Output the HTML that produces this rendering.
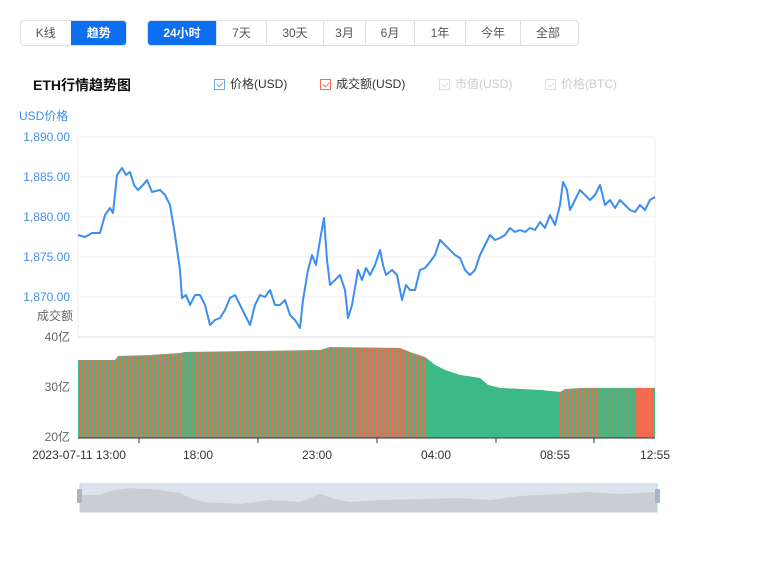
<!DOCTYPE html>
<html><head><meta charset="utf-8"><style>
body{margin:0;background:#fff;width:780px;height:563px;overflow:hidden;font-family:"Liberation Sans","Noto Sans CJK SC",sans-serif;position:relative}
.grp{position:absolute;top:20px;height:26px;display:flex;border:1px solid #dcdfe6;border-radius:4px;overflow:hidden;box-sizing:border-box}
.grp div{font-size:12px;color:#555;line-height:24px;text-align:center;border-left:1px solid #dcdfe6}
.grp div:first-child{border-left:none}
.grp .on{background:#0d6ff0;color:#fff;font-weight:bold;border-color:#0d6ff0}
.t{position:absolute;white-space:nowrap}
.cb{display:inline-block;width:11px;height:11px;border:1px solid;vertical-align:-2px;margin-right:5px;box-sizing:border-box;position:relative}
.cb:after{content:"";position:absolute;left:3px;top:1px;width:3px;height:5px;border:solid;border-width:0 1px 1px 0;border-color:inherit;transform:rotate(45deg)}
</style></head><body>
<div class="grp" style="left:20px;width:107px"><div style="width:51px">K线</div><div class="on" style="width:56px">趋势</div></div>
<div class="grp" style="left:147px;width:432px"><div class="on" style="width:68px">24小时</div><div style="width:49px">7天</div><div style="width:56px">30天</div><div style="width:41px">3月</div><div style="width:48px">6月</div><div style="width:50px">1年</div><div style="width:54px">今年</div><div style="width:54px">全部</div></div>
<div class="t" style="left:33px;top:75px;font-size:14px;font-weight:bold;color:#111">ETH行情趋势图</div>
<div class="t" style="left:214px;top:75px;font-size:12px;color:#333"><span class="cb" style="border-color:#6ca6f0"></span>价格(USD)</div>
<div class="t" style="left:320px;top:75px;font-size:12px;color:#333"><span class="cb" style="border-color:#f07050"></span>成交额(USD)</div>
<div class="t" style="left:439px;top:75px;font-size:12px;color:#ccc"><span class="cb" style="border-color:#ddd"></span>市值(USD)</div>
<div class="t" style="left:545px;top:75px;font-size:12px;color:#ccc"><span class="cb" style="border-color:#ddd"></span>价格(BTC)</div>
<div class="t" style="left:19px;top:107px;font-size:12px;color:#3d8ef0">USD价格</div>
<svg width="780" height="563" style="position:absolute;left:0;top:0" font-family="Liberation Sans,Noto Sans CJK SC,sans-serif">
<defs>
<pattern id="st" width="4" height="10" patternUnits="userSpaceOnUse"><rect width="2" height="10" fill="#f26b4f"/><rect x="2" width="2" height="10" fill="#3cba85"/></pattern>
<clipPath id="vc"><polygon points="78,360 115,360 118,356 150,355 180,353 185,352 250,351 320,350 330,347 400,348 410,352 425,357 435,365 445,370 460,375 480,378 488,385 500,388 540,390 560,392 565,389 580,388 655,388 655,438 78,438"/></clipPath>
</defs>
<g stroke="#eee" fill="none"><line x1="78" y1="137" x2="655" y2="137"/><line x1="78" y1="177" x2="655" y2="177"/><line x1="78" y1="217" x2="655" y2="217"/><line x1="78" y1="257" x2="655" y2="257"/><line x1="78" y1="297" x2="655" y2="297"/><line x1="78" y1="337" x2="655" y2="337" stroke="#ddd"/><line x1="78" y1="137" x2="78" y2="337"/><line x1="655" y1="137" x2="655" y2="437"/><line x1="78" y1="387" x2="655" y2="387"/></g>
<g clip-path="url(#vc)"><rect x="78" y="340" width="577" height="98" fill="url(#st)"/>
<rect x="425" y="340" width="135" height="98" fill="#3cba85"/><rect x="600" y="340" width="36" height="98" fill="#3cba85" opacity=".7"/><rect x="636" y="340" width="17" height="98" fill="#f26b4f"/><rect x="182" y="340" width="14" height="98" fill="#3cba85" opacity=".5"/><rect x="355" y="340" width="50" height="98" fill="#f26b4f" opacity=".4"/></g>
<line x1="78" y1="438" x2="655" y2="438" stroke="#333"/>
<g stroke="#333"><line x1="139" y1="438" x2="139" y2="443"/><line x1="258" y1="438" x2="258" y2="443"/><line x1="377" y1="438" x2="377" y2="443"/><line x1="496" y1="438" x2="496" y2="443"/><line x1="594" y1="438" x2="594" y2="443"/></g>
<polyline fill="none" stroke="#3d8ef0" stroke-width="2" stroke-linejoin="round" points="78,235 85,237 92,233 100,233 105,215 110,208 113,213 117,175 122,168 126,175 130,172 134,185 138,190 143,185 147,180 152,192 160,190 165,195 170,205 175,235 180,270 182,298 186,295 190,305 195,295 200,295 205,305 210,325 215,320 220,318 225,310 230,298 235,295 240,305 245,315 250,325 255,305 260,295 265,297 270,290 275,305 280,305 285,300 290,315 295,320 300,328 303,300 308,270 312,255 316,265 320,240 324,218 327,260 330,285 335,280 340,275 345,290 348,318 352,305 358,270 362,280 366,268 370,275 375,265 380,250 383,265 386,275 392,270 397,275 402,300 406,285 410,290 415,290 420,270 425,268 430,262 435,255 440,240 445,245 450,250 455,255 460,258 465,270 470,275 475,270 480,255 485,245 490,235 495,240 500,238 505,235 510,228 515,232 520,230 525,232 530,228 535,230 540,222 545,228 550,215 555,225 560,205 563,182 567,190 570,210 575,200 580,190 585,195 590,200 595,195 600,185 605,205 610,200 615,208 620,200 625,205 630,210 635,212 640,205 645,210 650,200 655,197"/>
<g font-size="12" fill="#3d8ef0" text-anchor="end"><text x="70" y="141">1,890.00</text><text x="70" y="181">1,885.00</text><text x="70" y="221">1,880.00</text><text x="70" y="261">1,875.00</text><text x="70" y="301">1,870.00</text></g>
<g font-size="12" fill="#666" text-anchor="end"><text x="73" y="320">成交额</text><text x="70" y="341">40亿</text><text x="70" y="391">30亿</text><text x="70" y="441">20亿</text></g>
<g font-size="12" fill="#333" text-anchor="middle"><text x="79" y="459">2023-07-11 13:00</text><text x="198" y="459">18:00</text><text x="317" y="459">23:00</text><text x="436" y="459">04:00</text><text x="555" y="459">08:55</text><text x="655" y="459">12:55</text></g>
<rect x="80" y="484" width="577" height="28" fill="#dde3ec" stroke="#c8d0dc"/>
<polygon fill="#c9ced6" points="80,495 100,495 110,491 130,488 160,490 180,493 190,498 205,502 240,504 270,500 300,502 320,494 335,499 350,502 380,500 420,499 460,498 490,500 520,496 560,494 585,492 620,494 657,492 657,512 80,512"/>
<rect x="77" y="489" width="5" height="14" fill="#a9b5c7"/><rect x="655" y="489" width="5" height="14" fill="#a9b5c7"/>
</svg>
</body></html>
